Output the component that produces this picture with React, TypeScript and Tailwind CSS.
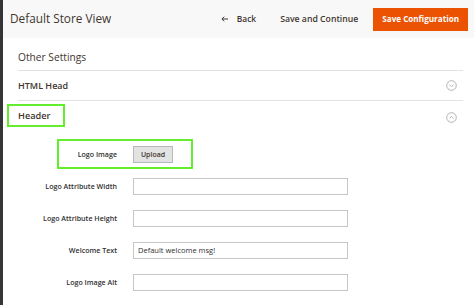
import React from "react";

const font = { fontFamily: '"Open Sans", "Liberation Sans", sans-serif' };

// small circled chevron used by the collapsible sections
const CircleChevron = ({ up }: { up?: boolean }) => (
  <svg width="11" height="11" viewBox="0 0 11 11" fill="none" stroke="#a9a9a9" strokeWidth="0.9">
    <circle cx="5.5" cy="5.5" r="4.8" />
    {up ? <path d="M3.5 6.5 L5.5 4.5 L7.5 6.5" /> : <path d="M3.5 4.7 L5.5 6.7 L7.5 4.7" />}
  </svg>
);

const Field = ({ label, value }: { label: string; value?: string }) => (
  <div className="grid grid-cols-[99px_215px] gap-x-[16px] items-center h-[17px]">
    <span className="text-right text-[7.1px] font-semibold text-[#303030] leading-none">{label}</span>
    <div className="h-[17px] border border-[#c6c6c6] bg-white flex items-center px-[4px] text-[7.5px] leading-none text-[#303030]">
      {value}
    </div>
  </div>
);

export default function App() {
  return (
    <div className="flex w-[474px] h-[305px] overflow-hidden bg-white" style={font}>
      <div className="w-[3px] bg-[#353535] shrink-0" />
      <div className="flex-1 flex flex-col">
        {/* page header */}
        <header className="h-[38px] bg-[#f8f8f8] flex items-center pl-[7px] pr-[6px]">
          <h1 className="text-[11.8px] text-[#41362f] leading-none">Default Store View</h1>
          <div className="ml-auto flex items-center">
            <span className="flex items-center gap-[9px] text-[8.4px] leading-none font-semibold text-[#41362f]">
              <svg width="7" height="6" viewBox="0 0 7 6" fill="none" stroke="#41362f" strokeWidth="1">
                <path d="M7 3 H1 M3.2 0.7 L0.9 3 L3.2 5.3" />
              </svg>
              Back
            </span>
            <span className="ml-[24px] text-[8.7px] leading-none font-semibold text-[#41362f]">Save and Continue</span>
            <span className="ml-[15px] h-[23px] px-[9px] bg-[#eb5202] text-white text-[8.1px] leading-none font-bold flex items-center">
              Save Configuration
            </span>
          </div>
        </header>

        {/* sections */}
        <div className="pl-[15px] pr-[11px] flex flex-col">
          <div className="h-[33px] border-b border-[#e3e3e3] pt-[12px]">
            <span className="block text-[10.2px] leading-[14px] text-[#41362f]">Other Settings</span>
          </div>
          <div className="h-[30px] border-b border-[#e3e3e3] flex items-center justify-between">
            <span className="text-[9px] font-semibold text-[#41362f]">HTML Head</span>
            <span className="mr-[6px] flex"><CircleChevron /></span>
          </div>
          <div className="relative h-[30px] flex items-center justify-between">
            <span className="text-[9.2px] font-semibold text-[#41362f]">Header</span>
            <span className="mr-[6px] mt-[3px] flex"><CircleChevron up /></span>
            <div className="absolute left-[-11px] top-[3px] w-[58px] h-[23px] border-2 border-[#62ee2c]" />
          </div>

          {/* form */}
          <div className="mt-[15px] flex flex-col gap-[15px]">
            <div className="relative grid grid-cols-[99px_215px] gap-x-[16px] items-center h-[17px]">
              <span className="text-right text-[7.1px] font-semibold text-[#303030] leading-none">Logo Image</span>
              <div className="flex">
                <span className="flex h-[17px] w-[40px] items-center justify-center bg-[#e3e3e3] border border-[#b8b8b8] text-[7px] leading-none font-semibold text-[#41362f]">
                  Upload
                </span>
              </div>
              <div className="absolute left-[39px] top-[-7px] w-[136px] h-[30px] border-2 border-[#62ee2c]" />
            </div>
            <Field label="Logo Attribute Width" />
            <Field label="Logo Attribute Height" />
            <Field label="Welcome Text" value="Default welcome msg!" />
            <Field label="Logo Image Alt" />
          </div>
        </div>
      </div>
    </div>
  );
}
